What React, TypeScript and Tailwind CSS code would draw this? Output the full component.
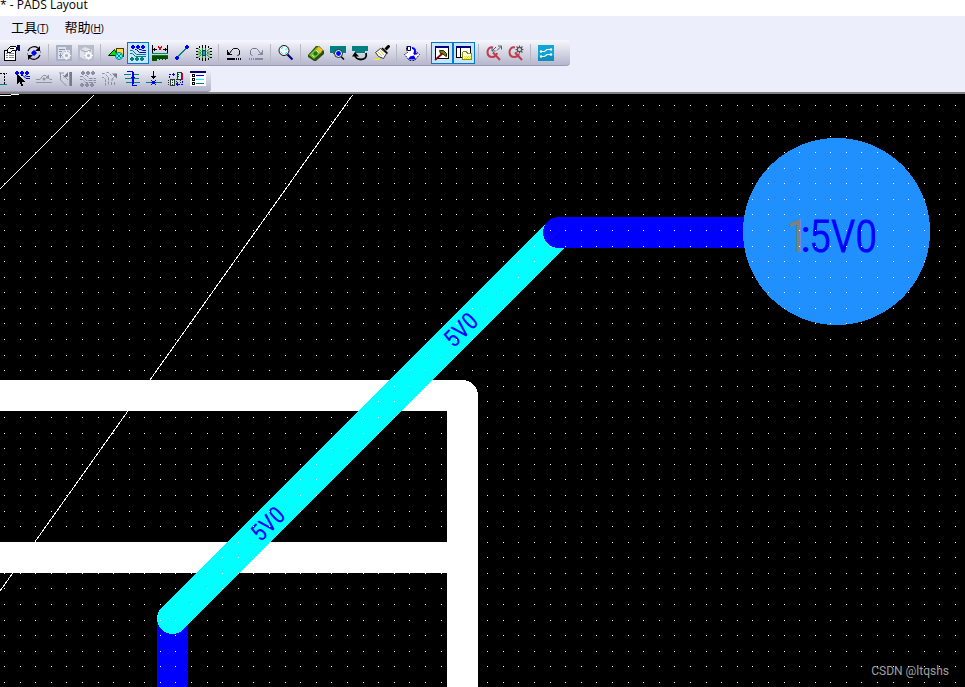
import type { ReactNode } from 'react';

type Tool = { label: string; icon: ReactNode; active?: boolean; disabled?: boolean };

const GRID = 15.59;
const WIRE = 31;

const viaRow = (y: number, xs: number[], fill: string) =>
  xs.map((x) => <path key={`${x}-${y}`} d={`M${x + 1} ${y}h2v1h1v2h-1v1h-2v-1h-1v-2h1z`} fill={fill} />);

const icons = {
  properties: (
    <>
      <path d="M.5 5.500h11v10H.5z" fill="#fff" stroke="#000" />
      <path d="M2 8.500h2M5 8.500h5M2 10.500h2M5 10.500h5M2 12.500h2M5 12.500h5" stroke="#888" />
      <path d="M3.500 7.500v-3l3-3h5l1 1v3h-4l-2 2z" fill="#fff" stroke="#000" />
      <path d="M6 3.500h4" stroke="#000" />
      <path d="M13 0h3v6h-2v-1h-1z" fill="#000080" />
    </>
  ),
  cycle: (
    <g shapeRendering="auto">
      <path d="M2 6a6.500 6.500 0 0 1 10-3M14 10a6.500 6.500 0 0 1-10 3" fill="none" stroke="#000" strokeWidth="1.200" />
      <path d="M1.500 8.500a6.500 6.500 0 0 0 1.500 3.500M14.500 7.500A6.500 6.500 0 0 0 13 4" fill="none" stroke="#333" strokeDasharray="1 1" />
      <path d="M14 1v5H9zM2 15v-5h5z" fill="#000" />
      <circle cx="8" cy="8" r="2.300" fill="#0000ff" />
      <path d="M8 5v6M5 8h6" stroke="#0000ff" />
    </g>
  ),
  archive: (
    <g shapeRendering="auto">
      <path d="M0 0h16v16H0z" fill="#a9b0c3" />
      <path d="M2 2h8v3h4v9H2z" fill="#dce0eb" />
      <path d="M3 4.500h6M3 6.500h3M4.500 8v5M3 10.500h4" stroke="#8d94a8" />
      <circle cx="10.500" cy="10.500" r="4.500" fill="#a9b0c3" />
      <circle cx="10.500" cy="10.500" r="2.500" fill="none" stroke="#f1f3fa" strokeWidth="1.800" />
      <path d="M10.500 6v2M10.500 13v2M6 10.500h2M13 10.500h2M7.500 7.500l1 1M12.500 12.500l1 1M13.500 7.500l-1 1M8.500 12.500l-1 1" stroke="#f1f3fa" strokeWidth="1.400" />
    </g>
  ),
  library: (
    <g shapeRendering="auto">
      <path d="M0 0h16v16H0z" fill="#b7bdcc" />
      <path d="M2 5l5-3 7 3v8l-5 2-7-3z" fill="#dfe2eb" />
      <path d="M3 5l5 2 5-2M7.500 7v7" fill="none" stroke="#969eaf" />
      <circle cx="10.500" cy="10.500" r="4.500" fill="#adb3c4" />
      <circle cx="10.500" cy="10.500" r="2.500" fill="none" stroke="#f8f9ff" strokeWidth="1.800" />
      <path d="M10.500 6v2M10.500 13v2M6 10.500h2M13 10.500h2M7.500 7.500l1 1M12.500 12.500l1 1M13.500 7.500l-1 1M8.500 12.500l-1 1" stroke="#f8f9ff" strokeWidth="1.400" />
    </g>
  ),
  shapes: (
    <>
      <path d="M8.500 3.500h7v8h-7z" fill="#ffd83a" stroke="#4b3a00" />
      <g shapeRendering="auto">
        <path d="M6.500 4.500L.5 10.500h9z" fill="#00e800" stroke="#002800" />
        <circle cx="11" cy="11" r="3.500" fill="#35ffff" stroke="#008080" />
        <path d="M9 9l4 4M13 9l-4 4" stroke="#008080" />
      </g>
    </>
  ),
  nets: (
    <>
      {viaRow(0, [1, 6, 11], '#0000ff')}
      <g fill="none" shapeRendering="auto">
        <path d="M5 4.500h1.500l3 3H16M9 4.500h2l1.500 1H16" stroke="#0000c0" />
        <path d="M0 5.500h2.500l4 4H16M0 8.500h2.500l3 3H16" stroke="#008080" />
      </g>
      {viaRow(12, [0, 5, 10], '#008080')}
    </>
  ),
  board: (
    <>
      <path d="M.5 0v9M15.500 0v9M1 4.500h4M11 4.500h4" stroke="#000" />
      <path d="M0 8h16v1H0z" fill="#008080" />
      <path d="M1 4h1V3h1v3H2V5H1zM15 4h-1V3h-1v3h1V5h1z" fill="#000" />
      <path d="M6 1h1v1h2V1h1v2H9v2H7V3H6z" fill="#f00000" />
      <path d="M0 10h16v4h-2v1h-1v-1h-2v1h-1v-1H8v1H7v-1H5v2H0z" fill="#005000" />
      <path d="M0 10.500h16" stroke="#008000" />
    </>
  ),
  trace: (
    <>
      <path d="M3 12.500L13 2.500" stroke="#008080" />
      <path d="M12 0h2v1h1v2h-1v1h-2V3h-1V1h1zM2 11h2v1h1v2H4v1H2v-1H1v-2h1z" fill="#0000ff" />
    </>
  ),
  chip: (
    <>
      <g shapeRendering="auto">
        <path d="M2 3.500l3.500 3M14 3.500l-3.500 3M2 12.500l3.500-3M14 12.500l-3.500-3M1 6.500l4 1M1 9.500l4-1M15 6.500l-4 1M15 9.500l-4-1M6.500 2v3M9.500 2v3M6.500 11v3M9.500 11v3" stroke="#008c00" strokeWidth=".9" />
      </g>
      <path d="M6 0h1v3H6zM9 0h1v3H9zM6 13h1v3H6zM9 13h1v3H9zM3 1h1v2H3zM12 1h1v2h-1zM3 13h1v2H3zM12 13h1v2h-1zM0 3h2v1H0zM14 3h2v1h-2zM0 12h2v1H0zM14 12h2v1h-2zM0 6h2v1H0zM0 9h2v1H0zM14 6h2v1h-2zM14 9h2v1h-2z" fill="#000" />
      <path d="M6 5h4v6H6z" fill="#004848" />
      <path d="M7 6h2v4H7z" fill="#00a8b8" />
    </>
  ),
  undo: (
    <>
      <path d="M3.500 8.500l2-3 2-2h4l2 2v4l-2 1" fill="none" stroke="#000" shapeRendering="auto" />
      <path d="M1 5h1v2h1v1h1v1h2v1H1zM1 13h8v2H1zM10 13h1v2h-1zM12 13h1v2h-1zM14 13h1v2h-1z" fill="#000" />
    </>
  ),
  redo: (
    <>
      <path d="M12.500 8.500l-2-3-2-2h-4l-2 2v4l2 1" fill="none" stroke="#73778a" shapeRendering="auto" />
      <path d="M15 5h-1v2h-1v1h-1v1h-2v1h5zM7 13h8v2H7zM5 13h1v2H5zM3 13h1v2H3zM1 13h1v2H1z" fill="#85899a" />
    </>
  ),
  zoom: (
    <g shapeRendering="auto">
      <path d="M9.500 9.500l5 5" stroke="#000080" strokeWidth="2.200" />
      <circle cx="6" cy="5.500" r="5" fill="#f5ffff" stroke="#111" />
      <path d="M3 3.500l2-1M2.500 7l2 1.500M7.500 4.500l2-1M7 8.500l2-1" stroke="#00e8ff" />
    </g>
  ),
  cash: (
    <g shapeRendering="auto">
      <path d="M0 10l8-9h3l5 5v3l-8 7H6l-6-4z" fill="#294e13" />
      <path d="M1 10l8-8 5 5-8 7z" fill="#78bd2f" />
      <path d="M4 10l2 2M8 5l3 3" stroke="#c9f26c" />
      <circle cx="7.500" cy="8.500" r="2" fill="#246c21" />
      <path d="M10 1l5 4-3 3-3-3z" fill="#f7bd25" />
    </g>
  ),
  inspect: (
    <>
      <path d="M0 1h16v7h-3v1H3V8H0z" fill="#008080" />
      <g shapeRendering="auto">
        <path d="M11 11.500l3 3" stroke="#000" strokeWidth="1.500" />
        <circle cx="8.500" cy="8.500" r="4" fill="#d7ffff" stroke="#222" />
        <circle cx="8.500" cy="8.500" r="2.400" fill="#0000ff" />
      </g>
    </>
  ),
  rotate: (
    <>
      <path d="M0 1h16v5h-3v2H3V6H0z" fill="#008080" />
      <g shapeRendering="auto">
        <path d="M3 10c0 3 3 4.500 6 4.500 4 0 6-2.500 5-6.500" fill="none" stroke="#000" strokeWidth="1.800" />
        <path d="M0 11.500l3-4.500 4 4.500z" fill="#000" />
      </g>
    </>
  ),
  brush: (
    <g shapeRendering="auto">
      <path d="M11.500 4.500l4-4" stroke="#000" strokeWidth="3" />
      <path d="M1.500 7.500l5-4 6 5-3 5-5-2z" fill="#fff" stroke="#333" />
      <path d="M8 3l5.500 5.500" stroke="#000" strokeWidth="1.600" />
      <path d="M4 7l4 4M6 5.500l4 4.500" stroke="#d8cb22" />
      <path d="M0 14.500h5M4 13.500h2" stroke="#ffee00" />
    </g>
  ),
  flow: (
    <g shapeRendering="auto">
      <path d="M2.500 4.500v-3h4l9 8-5 6h-5l-5-6 3-2z" fill="#fff" stroke="#222" strokeDasharray="2 1" />
      <path d="M3.500 1.500h3v4h-3z" fill="#fff" stroke="#000080" />
      <path d="M8 3c3 0 4 3 2 6" fill="none" stroke="#0000ff" strokeWidth="2" />
      <path d="M4 14.500l2-3 4-1 2 4zM10 6l4 3-4 1z" fill="#0000ff" />
    </g>
  ),
  hammer: (
    <>
      <path d="M1.500 1.500h13v12h-13z" fill="#fff" stroke="#000" />
      <path d="M1 1h14v2H1z" fill="#000080" />
      <g shapeRendering="auto">
        <path d="M1 15l8-7" stroke="#850014" strokeWidth="1.800" />
        <path d="M5.500 5.500h4l3 3v3l-2-1-2-2h-2z" fill="#7a7900" stroke="#302c00" />
      </g>
    </>
  ),
  project: (
    <>
      <path d="M.5 1.500h14v11H.5z" fill="#fff" stroke="#000" />
      <path d="M0 1h15v2H0z" fill="#000080" />
      <path d="M4.500 3v9" stroke="#000" />
      <path d="M6.500 14.500v-7l1-1h3l1 2h4v6z" fill="#ffffc8" stroke="#8b8b35" />
      <path d="M8 11.500h7M8 13.500h7M9 12.500h6" stroke="#e8e800" strokeDasharray="1 1" />
    </>
  ),
  outward: (
    <g shapeRendering="auto">
      <path d="M7 2.500C4 1.500 1.500 4 1.500 7s2 5 5 5 4-2 4.500-4M7 7.500l7 7.500" fill="none" stroke="#c23c4e" strokeWidth="2" />
      <path d="M6 6l4-4M11 5.500l4-4M12 1h3.500v3.500M6 2.500V6h3.500" fill="none" stroke="#575a60" />
    </g>
  ),
  settings: (
    <g shapeRendering="auto">
      <path d="M7 2.500C4 1.500 1.500 4 1.500 7s2 5 5 5 4-2 4.500-3M7 7.500l7 7.500" fill="none" stroke="#c23c4e" strokeWidth="2" />
      <path d="M11.500 .5v8M7.500 4.500h8M8.500 1.500l6 6M14.500 1.500l-6 6" stroke="#555" strokeWidth="1.200" />
      <circle cx="11.500" cy="4.500" r="2.200" fill="#d5d5de" stroke="#555" strokeWidth="1.200" />
    </g>
  ),
  route: (
    <g shapeRendering="auto">
      <path d="M0 0h16v16H0z" fill="#10a5d6" />
      <path d="M0 11h16v5H0z" fill="#0b8fbd" />
      <path d="M3 6.500h3.500L9 4.500h4M3 11.500h3.500L9 9.500h4" fill="none" stroke="#fff" strokeWidth="1.200" />
      <circle cx="3" cy="6.500" r="1.200" fill="#fff" />
      <circle cx="13" cy="4.500" r="1.200" fill="#fff" />
      <circle cx="3" cy="11.500" r="1.200" fill="#fff" />
      <circle cx="13" cy="9.500" r="1.200" fill="#fff" />
    </g>
  ),
  spacing: (
    <>
      <path d="M9 2.500h7M13.500 2v11" stroke="#000" strokeDasharray="2 1" />
      <path d="M8 13.500h8" stroke="#008080" />
    </>
  ),
  select: (
    <>
      {viaRow(0, [1, 6, 11], '#0000ff')}
      <path d="M7 4.500h2l3 3h4M11 4.500l2 1h3" fill="none" stroke="#0000c0" shapeRendering="auto" />
      <path d="M3 4v9h1v-1h1v-1h1v2h1v2h2v-2H8v-2h3v-1h-1V9H9V8H8V7H7V6H6V5H5V4z" fill="#000" />
    </>
  ),
  hump: (
    <g shapeRendering="auto">
      <path d="M0 11.500h16M0 8.500h4l3-4h3l4 4h2" fill="none" stroke="#8f93a4" />
      <path d="M13 3.500v4H9z" fill="#8f93a4" />
      <circle cx="8" cy="8" r="1.500" fill="#8f93a4" />
    </g>
  ),
  corner: (
    <g shapeRendering="auto">
      <path d="M11.500 1v14M2.500 2v7l6 6M1 2h5M5 4l5 5" fill="none" stroke="#9094a3" />
      <path d="M5 6.500l5-1V1zM12 1h2v14h-2z" fill="#777b88" />
    </g>
  ),
  bus: (
    <>
      {viaRow(0, [1, 6, 11], '#8b8fa1')}
      <g fill="none" stroke="#8b8fa1" shapeRendering="auto">
        <path d="M5 4.500h1.500l3 3H16M0 5.500h2.500l4 4H16M0 8.500h2.500l3 3H16" strokeDasharray="4 1" />
      </g>
      {viaRow(12, [0, 5, 10], '#8b8fa1')}
    </>
  ),
  fanout: (
    <g shapeRendering="auto">
      <path d="M0 2.500h2.500l4 4v8M0 6.500h1.500l2 2v6M4.500 1.500h2l3 3M9.500 8.500l4-4M9.500 14V10l2-2M12.500 14v-3" fill="none" stroke="#8b8fa1" strokeDasharray="3 1" />
      <path d="M10 2.500h5v5z" fill="#777b8c" />
    </g>
  ),
  length: (
    <>
      <path d="M0 3.500h7M9 3.500h6M1 7.500h14M2 11.500h14" stroke="#008080" />
      <path d="M3 .5h5.500v14H13" fill="none" stroke="#0000ff" />
      <path d="M9 1h1v12H9zM7 6h4v1H7z" fill="#0000c0" />
    </>
  ),
  via: (
    <>
      <path d="M7.500 0v8" stroke="#000" />
      <path d="M5 5h5v1H9v1H8v1H7V7H6V6H5z" fill="#000" />
      <path d="M0 11.500h16" stroke="#008080" />
      <path d="M6 10h3v3H6zM5 9h1v1H5zM9 9h1v1H9zM5 13h1v1H5zM9 13h1v1H9zM5 11h5v1H5z" fill="#0000ff" />
    </>
  ),
  swap: (
    <>
      <path d="M9.500 1.500h4v7h-4zM2.500 8.500h4v6h-4z" fill="#c8ffe7" stroke="#333" />
      <path d="M10.500 1v6M4.500 9v6" stroke="#005d18" strokeDasharray="1 1" />
      <path d="M14 2h1v7h-1z" fill="#c4005c" />
      <path d="M1.500 7V3.500H5M14.500 10v3.500H10" fill="none" stroke="#0000ff" strokeDasharray="2 1" />
      <path d="M5 2h1v1h1v1H6v1H5zM10 11v4H9v-1H8v-2h1v-1z" fill="#0000ff" />
      <path d="M.5 9v6M8.500 8v3M12.500 9v3" stroke="#333" strokeDasharray="1 1" />
    </>
  ),
  list: (
    <>
      <path d="M0 0h16v15H0z" fill="#fff" />
      <path d="M0 0h16v2H0z" fill="#000080" />
      <path d="M2.500 3.500h2v2h-2zM2.500 7.500h2v2h-2zM2.500 11.500h2v2h-2z" fill="#fff" stroke="#000" />
      <path d="M6 4.500h8" stroke="#0000ff" />
      <path d="M6 8.500h8" stroke="#00ffff" />
      <path d="M6 12.500h8" stroke="#008080" />
    </>
  ),
};

const mainTools: Tool[][] = [
  [
    { label: 'Properties', icon: icons.properties },
    { label: 'Cycle', icon: icons.cycle },
  ],
  [
    { label: 'Archive', icon: icons.archive, disabled: true },
    { label: 'Library', icon: icons.library, disabled: true },
  ],
  [
    { label: 'Drafting', icon: icons.shapes },
    { label: 'Design', icon: icons.nets, active: true },
    { label: 'Dimensioning', icon: icons.board },
    { label: 'Route', icon: icons.trace },
    { label: 'ECO', icon: icons.chip },
  ],
  [
    { label: 'Undo', icon: icons.undo },
    { label: 'Redo', icon: icons.redo, disabled: true },
  ],
  [{ label: 'Zoom', icon: icons.zoom }],
  [
    { label: 'Board', icon: icons.cash },
    { label: 'View board', icon: icons.inspect },
    { label: 'Previous view', icon: icons.rotate },
    { label: 'Redraw', icon: icons.brush },
  ],
  [{ label: 'Flood', icon: icons.flow }],
  [
    { label: 'Output window', icon: icons.hammer, active: true },
    { label: 'Project explorer', icon: icons.project, active: true },
  ],
  [
    { label: 'Quick link', icon: icons.outward },
    { label: 'Quick settings', icon: icons.settings },
  ],
  [{ label: 'Router', icon: icons.route }],
];

const designTools: Tool[] = [
  { label: 'Select', icon: icons.select },
  { label: 'Reroute', icon: icons.hump, disabled: true },
  { label: 'Add corner', icon: icons.corner, disabled: true },
  { label: 'Bus route', icon: icons.bus, disabled: true },
  { label: 'Fanout', icon: icons.fanout, disabled: true },
  { label: 'Length', icon: icons.length },
  { label: 'Add via', icon: icons.via },
  { label: 'Swap part', icon: icons.swap },
  { label: 'Options', icon: icons.list },
];

function Icon({ children }: { children: ReactNode }) {
  return (
    <svg viewBox="0 0 16 16" className="size-4 shrink-0" shapeRendering="crispEdges" aria-hidden="true">
      {children}
    </svg>
  );
}

function ToolButton({ label, icon, active, disabled }: Tool) {
  return (
    <button
      type="button"
      aria-label={label}
      disabled={disabled}
      className={`flex h-[22px] w-[22px] shrink-0 items-center justify-center border ${
        active ? 'border-[#0078d7] bg-[#cce4f7]' : 'border-transparent'
      }`}
    >
      <Icon>{icon}</Icon>
    </button>
  );
}

function MenuItem({ text, hotkey }: { text: string; hotkey: string }) {
  return (
    <button type="button" className="flex items-center text-[13px] text-black">
      <span>{text}</span>
      <span className="text-[10px]">
        (<u>{hotkey}</u>)
      </span>
    </button>
  );
}

// One dot per grid step, snapped to whole pixels
function gridPath(cols: number, rows: number) {
  let d = '';
  for (let r = 0; r < rows; r++) {
    for (let c = 0; c < cols; c++) {
      d += `M${Math.round(4 + c * GRID)} ${Math.round(11.2 + r * GRID)}h1v1h-1z`;
    }
  }
  return d;
}

const dots = gridPath(130, 80);

function Board() {
  return (
    <svg className="absolute inset-0 h-full w-full" role="img" aria-label="PCB layout">
      <g fill="none" shapeRendering="crispEdges">
        <path d="M0 95L94 1M352.500 1L0 497" stroke="#fff" />
        <path d="M0 1.500h11M11 .5h8" stroke="#fff" />
        <path d="M-20 301.500H462.500V2000M-20 463.500H462.500" stroke="#fff" strokeWidth={WIRE} strokeLinejoin="round" />
        <path d="M172.500 524.500V2000" stroke="#00f" strokeWidth={WIRE} />
        <path d="M172.500 524.500L558.500 138.500" stroke="#0ff" strokeWidth={WIRE} strokeLinecap="round" />
        <path d="M558.500 138.500H760" stroke="#00f" strokeWidth={WIRE} strokeLinecap="round" />
        <circle cx="836.500" cy="137.500" r="93.500" fill="#2090ff" />
      </g>
      <g className="font-['Roboto_Condensed','Liberation_Sans_Narrow','Roboto',sans-serif]" fill="#00f">
        <text x="786" y="158" fontSize="46" fill="#808080">1</text>
        <text x="800" y="158" fontSize="46">:</text>
        <text x="809" y="158" fontSize="45" className="font-light" stroke="#00f" strokeWidth="1">5V0</text>
        <text transform="translate(461 236) rotate(-45)" y="8" fontSize="24" textAnchor="middle">5V0</text>
        <text transform="translate(268 430) rotate(-45)" y="8" fontSize="24" textAnchor="middle">5V0</text>
      </g>
      <path d={dots} fill="#fff" shapeRendering="crispEdges" />
    </svg>
  );
}

export default function App() {
  return (
    <div className="flex min-h-screen flex-col bg-[#eceefb] font-['Open_Sans','Noto_Sans_CJK_SC',sans-serif]">
      <header className="h-4 bg-white">
        <h1 className="text-xs leading-[10px] whitespace-pre text-black">* - PADS Layout</h1>
      </header>

      <nav className="flex h-6 items-center gap-4 px-[11px]">
        <MenuItem text="工具" hotkey="T" />
        <MenuItem text="帮助" hotkey="H" />
      </nav>

      <div className="border-b-2 border-[#808080]">
        <div className="flex h-[26px] w-fit items-center rounded-r border-b border-[#9a9ab5] bg-linear-to-b from-[#f6f8fd] to-[#b6b6cd] pr-[13px] pl-px">
          {mainTools.map((group, i) => (
            <div key={group[0].label} className="flex items-center">
              {i > 0 && <span className="mr-[4px] ml-[3px] h-[18px] w-px bg-[#b9b9c6]" />}
              {group.map((tool) => (
                <ToolButton key={tool.label} {...tool} />
              ))}
            </div>
          ))}
        </div>
        <div className="flex h-[26px] w-fit items-center rounded-r border-b border-[#9a9ab5] bg-linear-to-b from-[#f6f8fd] to-[#b6b6cd] pr-[2px]">
          <button type="button" aria-label="Spacing" className="flex h-[22px] w-[11px] items-center justify-end overflow-hidden pr-1">
            <Icon>{icons.spacing}</Icon>
          </button>
          {designTools.map((tool) => (
            <ToolButton key={tool.label} {...tool} />
          ))}
        </div>
      </div>

      <main className="relative flex-1 overflow-hidden bg-black">
        <Board />
        <p className="absolute right-4 bottom-2 font-['Roboto','Noto_Sans_CJK_SC',sans-serif] text-xs leading-4 text-[#a0a0a0]">
          CSDN @ltqshs
        </p>
      </main>
    </div>
  );
}
